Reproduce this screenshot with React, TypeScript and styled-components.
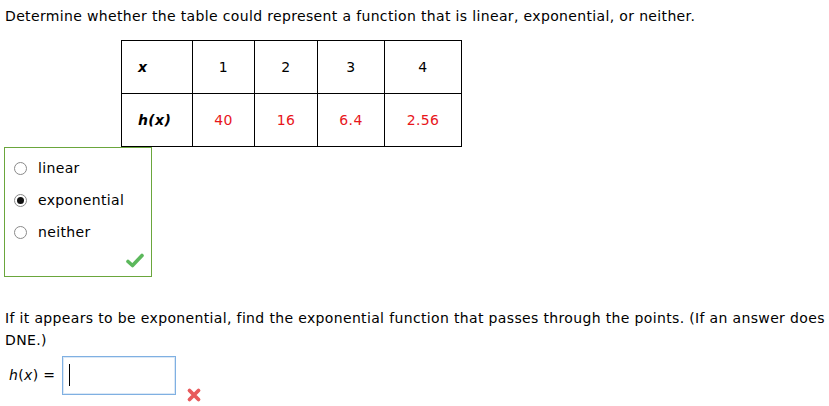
import React from "react";
import styled, { createGlobalStyle } from "styled-components";

const GlobalStyle = createGlobalStyle`
  body {
    margin: 0;
    background: #fff;
    font-family: "DejaVu Sans", Verdana, sans-serif;
    font-size: 14px;
    letter-spacing: 0.35px;
    color: #000;
  }
`;

const Page = styled.div`
  width: 829px;
  height: 406px;
  overflow: hidden;
  padding: 5px 0 0 5px;
  box-sizing: border-box;
`;

const Prompt = styled.div`
  line-height: 22px;
  white-space: nowrap;
`;

const ValueTable = styled.table`
  margin: 13px 0 0 116px;
  border-collapse: collapse;
  table-layout: fixed;
  width: 340px;
`;

const Row = styled.tr`
  height: 53px;
`;

const Cell = styled.td<{ $head?: boolean; $red?: boolean }>`
  border: 1px solid #000;
  padding: 0 ${(p) => (p.$head ? "16px" : "0")};
  text-align: ${(p) => (p.$head ? "left" : "center")};
  font-weight: ${(p) => (p.$head ? "bold" : "normal")};
  font-style: ${(p) => (p.$head ? "italic" : "normal")};
  color: ${(p) => (p.$red ? "#e8161b" : "#000")};
`;

const ChoiceBox = styled.div`
  position: relative;
  margin-left: -1px;
  width: 148px;
  height: 130px;
  box-sizing: border-box;
  border: 1px solid #6aa63c;
  padding-top: 4px;
`;

const ChoiceRow = styled.label`
  display: flex;
  align-items: center;
  height: 32px;
  padding-left: 9px;
  gap: 11px;
`;

const Radio = styled.span<{ $on?: boolean }>`
  width: 13px;
  height: 13px;
  box-sizing: border-box;
  border-radius: 50%;
  border: 1px solid #8a8a8a;
  background: #fff;
  display: flex;
  align-items: center;
  justify-content: center;
  &::after {
    content: "";
    display: ${(p) => (p.$on ? "block" : "none")};
    width: 7px;
    height: 7px;
    border-radius: 50%;
    background: #111;
  }
`;

const Check = styled.svg`
  position: absolute;
  right: 7px;
  bottom: 8px;
`;

const Question = styled.div`
  margin-top: 30px;
  line-height: 22px;
  white-space: nowrap;
`;

const AnswerRow = styled.div`
  display: flex;
  align-items: flex-start;
  margin-top: 5px;
  padding-left: 4px;
`;

const Label = styled.span`
  line-height: 39px;
  margin-right: 7px;
  i {
    font-style: italic;
  }
`;

const AnswerInput = styled.div`
  width: 114px;
  height: 39px;
  box-sizing: border-box;
  border: 1px solid #7fb0e2;
  box-shadow: inset 0 0 0 1px #dbe8f6;
  background: #fff;
  padding: 7px 0 0 6px;
`;

const Caret = styled.div`
  width: 1px;
  height: 22px;
  background: #000;
`;

const Wrong = styled.svg`
  margin: 31px 0 0 10px;
`;

const choices = [
  { label: "linear", on: false },
  { label: "exponential", on: true },
  { label: "neither", on: false },
];

export default function App() {
  const xs = ["1", "2", "3", "4"];
  const hs = ["40", "16", "6.4", "2.56"];
  return (
    <Page>
      <GlobalStyle />
      <Prompt>
        Determine whether the table could represent a function that is linear, exponential, or neither.
      </Prompt>
      <ValueTable>
        <colgroup>
          <col style={{ width: 71 }} />
          <col style={{ width: 62 }} />
          <col style={{ width: 63 }} />
          <col style={{ width: 67 }} />
          <col style={{ width: 77 }} />
        </colgroup>
        <tbody>
          <Row>
            <Cell $head>x</Cell>
            {xs.map((v) => (
              <Cell key={v}>{v}</Cell>
            ))}
          </Row>
          <Row>
            <Cell $head>h(x)</Cell>
            {hs.map((v) => (
              <Cell key={v} $red>
                {v}
              </Cell>
            ))}
          </Row>
        </tbody>
      </ValueTable>
      <ChoiceBox>
        {choices.map((c) => (
          <ChoiceRow key={c.label}>
            <Radio $on={c.on} />
            {c.label}
          </ChoiceRow>
        ))}
        <Check width="18" height="15" viewBox="0 0 18 15">
          <path
            d="M2 8.5 L6.5 12.5 L16 2.5"
            fill="none"
            stroke="#5cb85c"
            strokeWidth="3.6"
            strokeLinecap="round"
            strokeLinejoin="round"
          />
        </Check>
      </ChoiceBox>
      <Question>
        If it appears to be exponential, find the exponential function that passes through the points. (If an answer does
        <br />
        DNE.)
      </Question>
      <AnswerRow>
        <Label>
          <i>h</i>(<i>x</i>) =
        </Label>
        <AnswerInput>
          <Caret />
        </AnswerInput>
        <Wrong width="16" height="16" viewBox="0 0 16 16">
          <path
            d="M3.5 3.5 L12.5 12.5 M12.5 3.5 L3.5 12.5"
            stroke="#e85a5c"
            strokeWidth="3.8"
            strokeLinecap="round"
          />
        </Wrong>
      </AnswerRow>
    </Page>
  );
}
